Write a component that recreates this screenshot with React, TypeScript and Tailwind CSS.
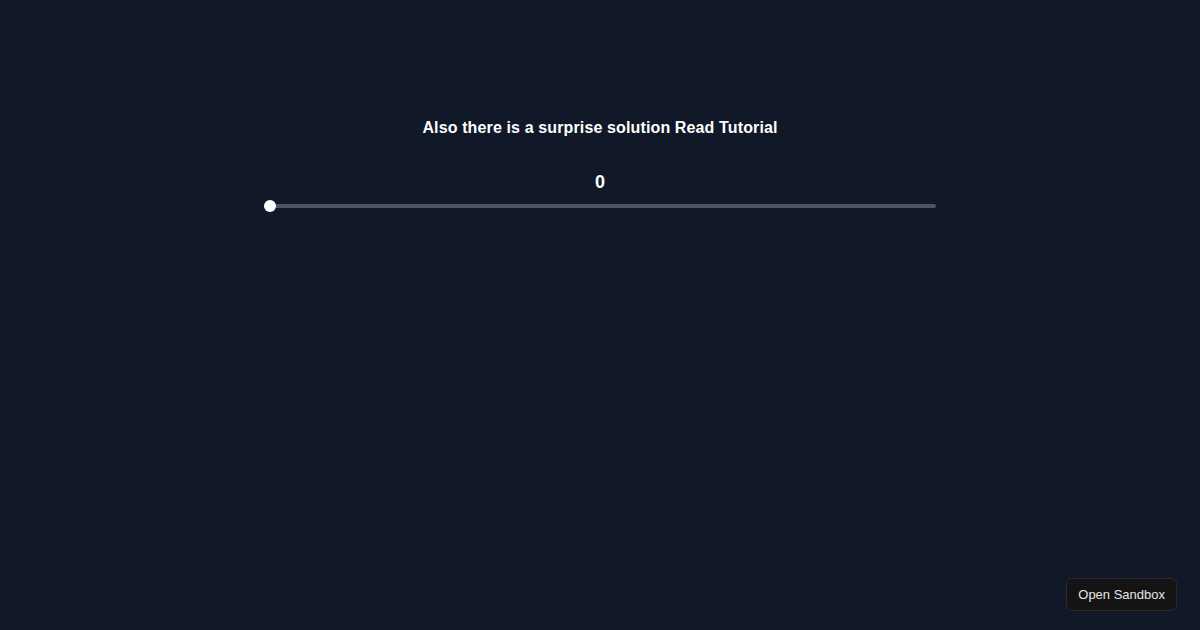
import React, { useState } from "react";

export default function App() {
  const [value, setValue] = useState(0);

  return (
    <div
      className="relative min-h-screen w-full bg-[#111827] text-white flex flex-col items-center"
      style={{ fontFamily: '"Liberation Sans", Arial, sans-serif' }}
    >
      <h1 className="mt-[116px] text-base leading-6 font-bold tracking-[0.13px]">
        Also there is a surprise solution Read Tutorial
      </h1>
      <div className="mt-[28px] text-lg leading-7 font-bold">{value}</div>

      {/* slider */}
      <div className="mt-[4px] w-full max-w-2xl h-3 relative flex items-center">
        <div className="w-full h-1 rounded-sm bg-[#4b5563]" />
        <div
          className="absolute top-0 w-3 h-3 rounded-full bg-white"
          style={{ left: `${(value / 100) * (672 - 12)}px` }}
        />
        <input
          type="range"
          min={0}
          max={100}
          value={value}
          onChange={(e) => setValue(parseInt(e.target.value))}
          className="absolute inset-0 w-full opacity-0 cursor-pointer"
        />
      </div>

      <button className="absolute right-[23px] bottom-[19px] h-[33px] px-[11px] rounded-md border border-[#2a2a2a] bg-[#141414] text-[13px] text-[#e5e5e5]">
        Open Sandbox
      </button>
    </div>
  );
}
